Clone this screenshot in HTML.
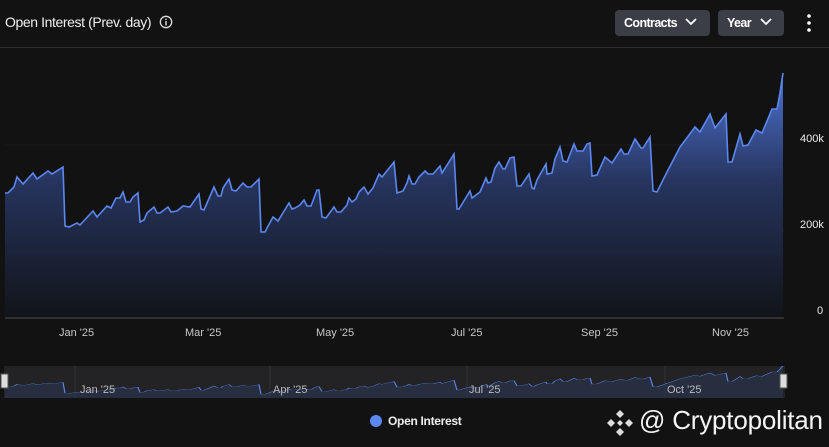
<!DOCTYPE html>
<html><head><meta charset="utf-8"><style>
body{margin:0;width:829px;height:447px;background:#121212;overflow:hidden;font-family:"Liberation Sans",sans-serif;color:#e8e8e8;position:relative}
.t{position:absolute;left:5px;top:14px;font-size:14px;letter-spacing:-0.4px;color:#f0f0f0}
.btn{position:absolute;top:10px;height:26px;background:#3b3e46;border-radius:4px;font-size:12.5px;font-weight:bold;color:#fff;line-height:26px;padding-left:9px;box-sizing:border-box;letter-spacing:-0.6px}
.lbl{position:absolute;font-size:11px;color:#c8c8c8}
</style></head><body>
<div class="t">Open Interest (Prev. day)</div>
<svg style="position:absolute;left:159px;top:15px" width="14" height="14"><circle cx="7" cy="7" r="5.7" fill="none" stroke="#ddd" stroke-width="1.3"/><rect x="6.3" y="6" width="1.4" height="4.5" fill="#ddd"/><rect x="6.3" y="3.6" width="1.4" height="1.4" fill="#ddd"/></svg>
<div class="btn" style="left:615px;width:95px">Contracts</div>
<div class="btn" style="left:718px;width:66px">Year</div>
<svg style="position:absolute;left:684px;top:17px" width="14" height="10"><path d="M2 2l5 5 5-5" fill="none" stroke="#fff" stroke-width="1.8"/></svg>
<svg style="position:absolute;left:759px;top:17px" width="14" height="10"><path d="M2 2l5 5 5-5" fill="none" stroke="#fff" stroke-width="1.8"/></svg>
<svg style="position:absolute;left:805px;top:13px" width="8" height="20"><circle cx="4" cy="3" r="1.8" fill="#fff"/><circle cx="4" cy="10" r="1.8" fill="#fff"/><circle cx="4" cy="17" r="1.8" fill="#fff"/></svg>
<div style="position:absolute;left:0;top:47px;width:829px;height:1px;background:#2c2c30"></div>
<svg style="position:absolute;left:0;top:0" width="829" height="447">
<defs>
<linearGradient id="g" x1="0" y1="70" x2="0" y2="318" gradientUnits="userSpaceOnUse"><stop offset="0" stop-color="#4f75d6"/><stop offset="0.45" stop-color="#26345e"/><stop offset="1" stop-color="#121419"/></linearGradient>
<clipPath id="mc"><rect x="4" y="366" width="781" height="32"/></clipPath>
<path id="ln" d="M5,193 L8,193 14,187 17,177 23,184 33,173 37,179 48,171 52,174 63,167 65,226 69,227 77,223 80,225 93,211 97,217 107,206 111,208 116,198 120,198 123,192 126,202 130,202 133,197 138,193 140,222 144,220 147,213 154,207 157,213 160,213 168,207 171,212 177,211 183,206 190,207 199,194 201,209 204,210 214,187 218,196 221,196 223,188 229,179 232,190 236,191 243,183 247,187 251,187 259,179 261,232 265,232 273,217 278,221 289,203 292,209 295,208 300,205 304,200 307,206 311,206 317,190 319,190 322,217 326,218 334,207 337,212 341,212 347,205 349,198 352,202 356,199 359,192 364,187 368,194 373,188 379,174 382,177 394,162 397,193 403,191 407,183 409,176 412,184 415,184 419,177 425,171 428,174 433,174 440,166 442,173 454,154 457,209 459,209 470,191 472,198 480,192 486,178 488,183 491,182 495,168 499,162 503,169 505,169 510,158 514,157 517,186 521,186 529,174 532,188 534,189 537,180 546,164 547,174 552,173 555,159 560,147 563,161 567,162 574,144 577,151 583,151 587,144 590,143 592,176 597,175 605,157 612,163 621,149 624,154 628,154 635,139 641,148 643,148 650,137 653,191 657,192 667,172 680,147 695,127 700,132 710,114 715,128 726,114 728,162 732,162 740,134 743,146 748,145 756,130 762,133 772,109 777,109 780,93 783,73"/>
<path id="ar" d="M5,318 L5,193 L8,193 14,187 17,177 23,184 33,173 37,179 48,171 52,174 63,167 65,226 69,227 77,223 80,225 93,211 97,217 107,206 111,208 116,198 120,198 123,192 126,202 130,202 133,197 138,193 140,222 144,220 147,213 154,207 157,213 160,213 168,207 171,212 177,211 183,206 190,207 199,194 201,209 204,210 214,187 218,196 221,196 223,188 229,179 232,190 236,191 243,183 247,187 251,187 259,179 261,232 265,232 273,217 278,221 289,203 292,209 295,208 300,205 304,200 307,206 311,206 317,190 319,190 322,217 326,218 334,207 337,212 341,212 347,205 349,198 352,202 356,199 359,192 364,187 368,194 373,188 379,174 382,177 394,162 397,193 403,191 407,183 409,176 412,184 415,184 419,177 425,171 428,174 433,174 440,166 442,173 454,154 457,209 459,209 470,191 472,198 480,192 486,178 488,183 491,182 495,168 499,162 503,169 505,169 510,158 514,157 517,186 521,186 529,174 532,188 534,189 537,180 546,164 547,174 552,173 555,159 560,147 563,161 567,162 574,144 577,151 583,151 587,144 590,143 592,176 597,175 605,157 612,163 621,149 624,154 628,154 635,139 641,148 643,148 650,137 653,191 657,192 667,172 680,147 695,127 700,132 710,114 715,128 726,114 728,162 732,162 740,134 743,146 748,145 756,130 762,133 772,109 777,109 780,93 783,73 L783,318 Z"/>
</defs>
<line x1="5" y1="145" x2="784" y2="145" stroke="#1c1c1f"/>
<line x1="5" y1="231" x2="784" y2="231" stroke="#1c1c1f"/>
<use href="#ar" fill="url(#g)"/>
<use href="#ln" fill="none" stroke="#5b87f0" stroke-width="1.6"/>
<line x1="5" y1="318" x2="784" y2="318" stroke="#3a3a3e" stroke-width="1.5"/>
<rect x="4" y="366" width="781" height="32" fill="#232325"/>
<line x1="75" y1="366" x2="75" y2="398" stroke="#333"/>
<line x1="270" y1="366" x2="270" y2="398" stroke="#333"/>
<line x1="467" y1="366" x2="467" y2="398" stroke="#333"/>
<line x1="665" y1="366" x2="665" y2="398" stroke="#333"/>
<g clip-path="url(#mc)">
<g transform="translate(0,352.4) scale(1,0.18)">
<use href="#ar" fill="#2a3553" opacity="0.6"/>
<use href="#ln" fill="none" stroke="#5b87f0" stroke-width="1.2" vector-effect="non-scaling-stroke"/>
</g>
</g>
<rect x="1" y="374" width="7" height="14" fill="#ddd" stroke="#555"/>
<rect x="780" y="374" width="7" height="14" fill="#ddd" stroke="#555"/>
<circle cx="376" cy="421" r="6" fill="#5b87f0"/>
</svg>
<div class="lbl" style="left:59px;top:327px">Jan '25</div>
<div class="lbl" style="left:185px;top:327px">Mar '25</div>
<div class="lbl" style="left:316px;top:327px">May '25</div>
<div class="lbl" style="left:451px;top:327px">Jul '25</div>
<div class="lbl" style="left:581px;top:327px">Sep '25</div>
<div class="lbl" style="left:712px;top:327px">Nov '25</div>
<div class="lbl" style="left:800px;top:133px;color:#eee">400k</div>
<div class="lbl" style="left:800px;top:219px;color:#eee">200k</div>
<div class="lbl" style="left:817px;top:305px;color:#eee">0</div>
<div class="lbl" style="left:80px;top:384px;color:#bbb">Jan '25</div>
<div class="lbl" style="left:273px;top:384px;color:#bbb">Apr '25</div>
<div class="lbl" style="left:469px;top:384px;color:#bbb">Jul '25</div>
<div class="lbl" style="left:667px;top:384px;color:#bbb">Oct '25</div>
<div style="position:absolute;left:388px;top:414px;font-size:12px;font-weight:bold;color:#eee;letter-spacing:-0.3px">Open Interest</div>
<svg style="position:absolute;left:605px;top:408px" width="30" height="30"><g fill="#ddd"><path d="M15 2l4 4-4 4-4-4z"/><path d="M15 20l4 4-4 4-4-4z"/><path d="M6 11l4 4-4 4-4-4z"/><path d="M24 11l4 4-4 4-4-4z"/><path d="M15 12l3 3-3 3-3-3z"/></g></svg>
<div style="position:absolute;left:639px;top:405px;font-size:26px;color:#f4f4f4;letter-spacing:-0.2px">@ Cryptopolitan</div>
</body></html>
